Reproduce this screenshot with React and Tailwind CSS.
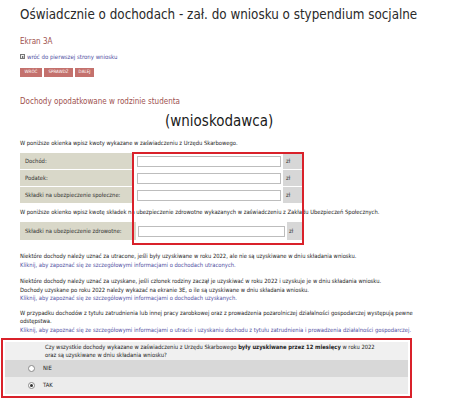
const font = "font-['DejaVu_Sans_Condensed','DejaVu_Sans',sans-serif]"

function Row({ label, last }) {
  return (
    <div className={`flex h-[16px] ${last ? '' : 'mb-px'}`}>
      <div className="w-[113px] bg-[#d9d8c9] flex items-center pl-[5px] text-[5.8px] text-[#333]">{label}</div>
      <div className="flex-1 bg-white flex items-center pl-[4px] pr-[2px]">
        <div className="w-full h-[11px] border border-[#bdbdbd] bg-white" />
      </div>
      <div className="w-[19px] bg-[#d7d7d7] flex items-center pl-[3px] text-[5.8px] text-[#333]">zł</div>
    </div>
  )
}

function Radio({ checked }) {
  return (
    <span className="w-[7px] h-[7px] rounded-full border border-[#8a8a8a] bg-white flex items-center justify-center">
      {checked && <span className="w-[3px] h-[3px] rounded-full bg-[#333]" />}
    </span>
  )
}

export default function App() {
  return (
    <div className={`w-[474px] h-[401px] overflow-hidden bg-white text-[#1c1c1c] ${font}`}>
      <div className="pl-5 pt-[6px]">
        <h1 className="text-[13.3px] leading-[18px] text-[#2a2a2a]">Oświadcznie o dochodach - zał. do wniosku o stypendium socjalne</h1>
        <div className="mt-[13px] text-[8px] leading-[10px] text-[#a0524f]">Ekran 3A</div>
        <div className="mt-[6px] flex items-center gap-[2px] text-[6px] leading-[7px] text-[#4f4f9f]">
          <span className="w-[5px] h-[5px] border border-[#777] bg-[#eee] flex items-center justify-center">
            <span className="w-0 h-0 border-y-[1.5px] border-y-transparent border-l-[2px] border-l-[#444]" />
          </span>
          <span>wróć do pierwszej strony wniosku</span>
        </div>
        <div className="mt-[8px] flex gap-[2px]">
          <span className="h-[9px] w-[22px] bg-[#c4716d] text-white text-[4.5px] flex items-center justify-center">WRÓĆ</span>
          <span className="h-[9px] w-[29px] bg-[#c4716d] text-white text-[4.5px] flex items-center justify-center">SPRAWDŹ</span>
          <span className="h-[9px] w-[19px] bg-[#c4716d] text-white text-[4.5px] flex items-center justify-center">DALEJ</span>
        </div>
        <div className="mt-[20px] text-[8px] leading-[10px] text-[#a0524f]">Dochody opodatkowane w rodzinie studenta</div>
        <div className="mt-[5px] pl-[145px] text-[15px] leading-[18px] text-[#1a1a1a]">(wnioskodawca)</div>
        <div className="relative w-[282px]">
          <p className="mt-[9px] text-[5.8px] leading-[8px]">W poniższe okienka wpisz kwoty wykazane w zaświadczeniu z Urzędu Skarbowego.</p>
          <div className="mt-[6px]">
            <Row label="Dochód:" />
            <Row label="Podatek:" />
            <Row label="Składki na ubezpieczenie społeczne:" last />
          </div>
          <p className="mt-[5px] whitespace-nowrap text-[5.8px] leading-[8px]">W poniższe okienko wpisz kwotę składek na ubezpieczenie zdrowotne wykazanych w zaświadczeniu z Zakładu Ubezpieczeń Społecznych.</p>
          <div className="mt-[6px]">
            <div className="flex h-[18px]">
              <div className="w-[116px] bg-[#d9d8c9] flex items-center pl-[5px] text-[5.8px] text-[#333]">Składki na ubezpieczenie zdrowotne:</div>
              <div className="flex-1 bg-white flex items-center pl-[2px] pr-[2px]">
                <div className="w-full h-[11px] border border-[#bdbdbd] bg-white" />
              </div>
              <div className="w-[15px] bg-[#d7d7d7] flex items-center pl-[2px] text-[5.8px] text-[#333]">zł</div>
            </div>
          </div>
          <div className="absolute left-[112px] top-[13px] w-[172px] bottom-[-5px] border-2 border-[#d9212a] pointer-events-none" />
        </div>
        <div className="mt-[12px] text-[5.8px] leading-[8.5px]">
          <p>Niektóre dochody należy uznać za utracone, jeśli były uzyskiwane w roku 2022, ale nie są uzyskiwane w dniu składania wniosku.</p>
          <p className="text-[#4f4f9f]">Kliknij, aby zapoznać się ze szczegółowymi informacjami o dochodach utraconych.</p>
          <p className="mt-[8px]">Niektóre dochody należy uznać za uzyskane, jeśli członek rodziny zaczął je uzyskiwać w roku 2022 i uzyskuje je w dniu składania wniosku.</p>
          <p>Dochody uzyskane po roku 2022 należy wykazać na ekranie 3E, o ile są uzyskiwane w dniu składania wniosku.</p>
          <p className="text-[#4f4f9f]">Kliknij, aby zapoznać się ze szczegółowymi informacjami o dochodach uzyskanych.</p>
          <p className="mt-[6px]">W przypadku dochodów z tytułu zatrudnienia lub innej pracy zarobkowej oraz z prowadzenia pozarolniczej działalności gospodarczej występują pewne<br />odstępstwa.</p>
          <p className="text-[#4f4f9f]">Kliknij, aby zapoznać się ze szczegółowymi informacjami o utracie i uzyskaniu dochodu z tytułu zatrudnienia i prowadzenia działalności gospodarczej.</p>
        </div>
      </div>
      <div className="ml-px mt-[4px] w-[411px] border-2 border-[#d9212a] p-[2px] text-[5.8px] text-[#222]">
        <div className="flex bg-[#f0f0f0] py-px">
          <div className="w-[40px] shrink-0" />
          <div className="leading-[8px]">
            Czy wszystkie dochody wykazane w zaświadczeniu z Urzędu Skarbowego <b>były uzyskiwane przez 12 miesięcy</b> w roku 2022<br />oraz są uzyskiwane w dniu składania wniosku?
          </div>
        </div>
        <div className="flex items-center h-[17px] bg-[#d8d8d8]">
          <div className="w-[38px] shrink-0 flex justify-center pl-[14px]"><Radio /></div>
          <span>NIE</span>
        </div>
        <div className="flex items-center h-[17px] bg-[#ececec]">
          <div className="w-[38px] shrink-0 flex justify-center pl-[14px]"><Radio checked /></div>
          <span>TAK</span>
        </div>
      </div>
    </div>
  )
}
